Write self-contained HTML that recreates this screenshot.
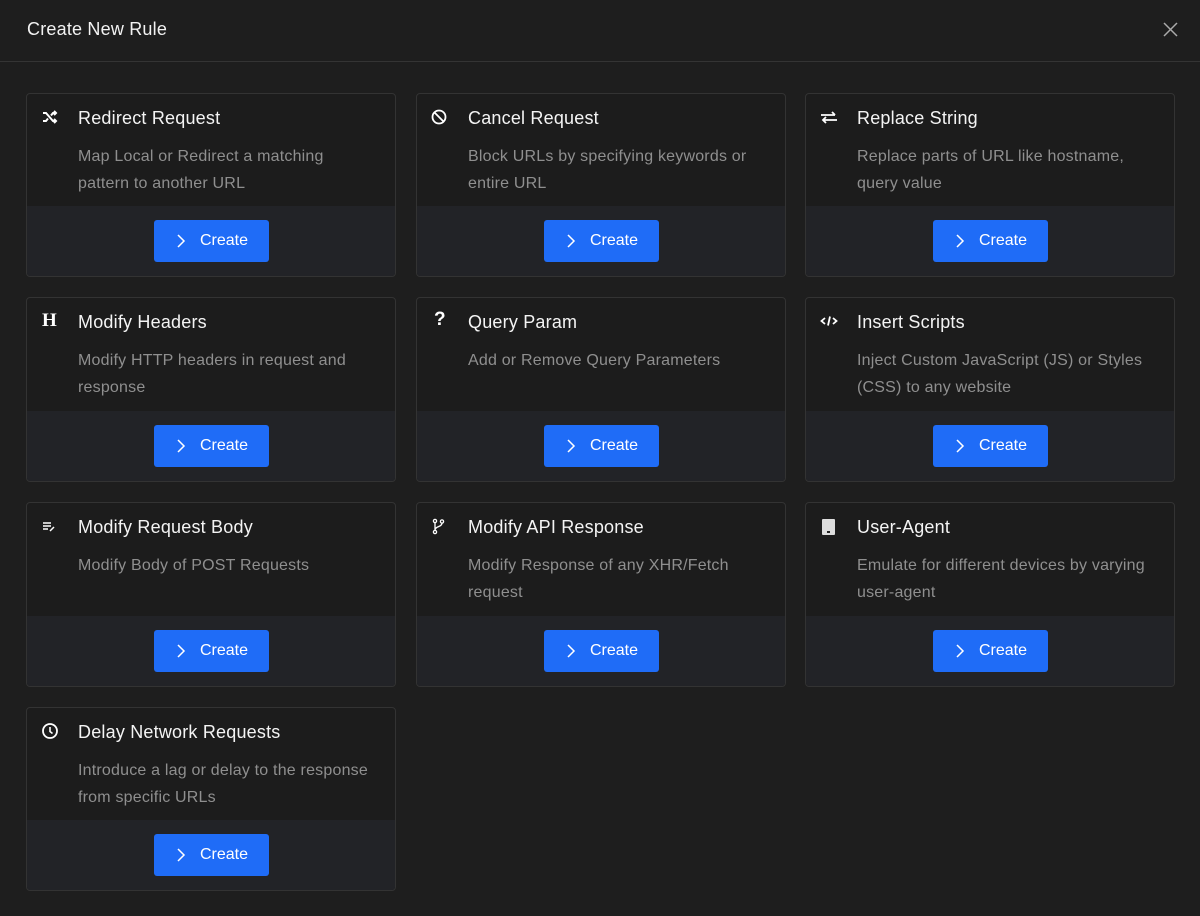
<!DOCTYPE html>
<html><head><meta charset="utf-8"><style>
*{box-sizing:border-box;margin:0;padding:0}
body{width:1200px;height:916px;background:#1e1e1e;font-family:"Liberation Sans",Roboto,sans-serif;overflow:hidden;position:relative}
.hdr{height:62px;border-bottom:1px solid #343434;position:relative}
.hdr h1{position:absolute;left:27px;top:19px;font-size:18px;font-weight:normal;color:#f2f2f2;letter-spacing:0.2px}
.close{position:absolute;left:1163px;top:22px}
.card{position:absolute;width:370px;height:184px;background:#1c1c1c;border:1px solid #333;border-radius:4px;overflow:hidden}
.card .ic{position:absolute;left:14px;top:15px;width:18px;height:18px}
.card h2{position:absolute;left:51px;top:14px;font-size:18px;font-weight:normal;color:#f4f4f4;letter-spacing:0.2px}
.card p{position:absolute;left:51px;top:50px;width:282px;font-size:16px;line-height:26.5px;color:#8f8f8f;letter-spacing:0.2px}
.ft{position:absolute;left:0;right:0;bottom:0;height:70px;background:#222327}
.btn{position:absolute;left:127px;top:14px;width:115px;height:42px;background:#1f6cf7;border-radius:3px;color:#fff;font-size:16px;line-height:42px;padding-left:46px}
.btn svg{position:absolute;left:22px;top:14px}
</style></head><body>
<div class="hdr"><h1>Create New Rule</h1>
<svg class="close" width="15" height="15" viewBox="0 0 15 15"><path d="M1 1L14 14M14 1L1 14" stroke="#aaa" stroke-width="1.5"/></svg></div>

<div class="card" style="left:26px;top:93px">
<svg class="ic" viewBox="0 0 18 18" style="top:14px"><path d="M2 5h3l7 8h3M2 13h3l2-2.5M10 7.5L12 5h3M13 3l2 2-2 2M13 11l2 2-2 2" stroke="#fff" stroke-width="2" fill="none"/></svg>
<h2>Redirect Request</h2><p>Map Local or Redirect a matching pattern to another URL</p>
<div class="ft"><div class="btn"><svg width="10" height="14" viewBox="0 0 10 14"><path d="M2 1l6 6-6 6" stroke="#fff" stroke-width="1.5" fill="none"/></svg>Create</div></div></div>

<div class="card" style="left:416px;top:93px">
<svg class="ic" viewBox="0 0 18 18"><circle cx="8" cy="8" r="6.5" stroke="#fff" stroke-width="1.8" fill="none"/><path d="M3.5 3.5l9 9" stroke="#fff" stroke-width="1.8"/></svg>
<h2>Cancel Request</h2><p>Block URLs by specifying keywords or entire URL</p>
<div class="ft"><div class="btn"><svg width="10" height="14" viewBox="0 0 10 14"><path d="M2 1l6 6-6 6" stroke="#fff" stroke-width="1.5" fill="none"/></svg>Create</div></div></div>

<div class="card" style="left:805px;top:93px">
<svg class="ic" viewBox="0 0 18 18"><path d="M1 6h14M12 3l3 3M17 11H3M6 8l-3 3 3 3" stroke="#fff" stroke-width="1.8" fill="none"/></svg>
<h2>Replace String</h2><p>Replace parts of URL like hostname, query value</p>
<div class="ft"><div class="btn"><svg width="10" height="14" viewBox="0 0 10 14"><path d="M2 1l6 6-6 6" stroke="#fff" stroke-width="1.5" fill="none"/></svg>Create</div></div></div>

<div class="card" style="left:26px;top:297px;height:185px">
<div class="ic" style="color:#fff;font:bold 19px 'Liberation Serif',serif;top:12px;left:15px">H</div>
<h2>Modify Headers</h2><p>Modify HTTP headers in request and response</p>
<div class="ft"><div class="btn"><svg width="10" height="14" viewBox="0 0 10 14"><path d="M2 1l6 6-6 6" stroke="#fff" stroke-width="1.5" fill="none"/></svg>Create</div></div></div>

<div class="card" style="left:416px;top:297px;height:185px">
<div class="ic" style="color:#fff;font:bold 19px 'Liberation Sans',sans-serif;top:11px;left:17px">?</div>
<h2>Query Param</h2><p>Add or Remove Query Parameters</p>
<div class="ft"><div class="btn"><svg width="10" height="14" viewBox="0 0 10 14"><path d="M2 1l6 6-6 6" stroke="#fff" stroke-width="1.5" fill="none"/></svg>Create</div></div></div>

<div class="card" style="left:805px;top:297px;height:185px">
<svg class="ic" viewBox="0 0 18 18"><path d="M5 5L1.5 8 5 11M13 5l3.5 3-3.5 3M10 3.5L8 12.5" stroke="#fff" stroke-width="1.8" fill="none"/></svg>
<h2>Insert Scripts</h2><p style="width:310px">Inject Custom JavaScript (JS) or Styles (CSS) to any website</p>
<div class="ft"><div class="btn"><svg width="10" height="14" viewBox="0 0 10 14"><path d="M2 1l6 6-6 6" stroke="#fff" stroke-width="1.5" fill="none"/></svg>Create</div></div></div>

<div class="card" style="left:26px;top:502px;height:185px">
<svg class="ic" viewBox="0 0 18 18"><path d="M2 5h8M2 8h8M2 11h5M9 13l4-4" stroke="#fff" stroke-width="1.5" fill="none"/></svg>
<h2>Modify Request Body</h2><p>Modify Body of POST Requests</p>
<div class="ft"><div class="btn"><svg width="10" height="14" viewBox="0 0 10 14"><path d="M2 1l6 6-6 6" stroke="#fff" stroke-width="1.5" fill="none"/></svg>Create</div></div></div>

<div class="card" style="left:416px;top:502px;height:185px">
<svg class="ic" viewBox="0 0 18 18"><circle cx="4" cy="3" r="1.6" stroke="#fff" stroke-width="1.3" fill="none"/><circle cx="4" cy="14" r="1.6" stroke="#fff" stroke-width="1.3" fill="none"/><circle cx="11" cy="3.5" r="1.6" stroke="#fff" stroke-width="1.3" fill="none"/><path d="M4 4.6v7.8M11 5.1c0 4-7 3-7 7" stroke="#fff" stroke-width="1.3" fill="none"/></svg>
<h2>Modify API Response</h2><p>Modify Response of any XHR/Fetch request</p>
<div class="ft"><div class="btn"><svg width="10" height="14" viewBox="0 0 10 14"><path d="M2 1l6 6-6 6" stroke="#fff" stroke-width="1.5" fill="none"/></svg>Create</div></div></div>

<div class="card" style="left:805px;top:502px;height:185px">
<svg class="ic" viewBox="0 0 18 18"><rect x="2" y="1" width="13" height="16" rx="1" fill="#ddd"/><rect x="7" y="13" width="3" height="2" fill="#222"/></svg>
<h2>User-Agent</h2><p style="width:300px">Emulate for different devices by varying user-agent</p>
<div class="ft"><div class="btn"><svg width="10" height="14" viewBox="0 0 10 14"><path d="M2 1l6 6-6 6" stroke="#fff" stroke-width="1.5" fill="none"/></svg>Create</div></div></div>

<div class="card" style="left:26px;top:707px">
<svg class="ic" viewBox="0 0 18 18"><circle cx="9" cy="8" r="7" stroke="#fff" stroke-width="1.8" fill="none"/><path d="M9 4v4.5l2.5 2" stroke="#fff" stroke-width="1.6" fill="none"/></svg>
<h2>Delay Network Requests</h2><p style="width:310px">Introduce a lag or delay to the response from specific URLs</p>
<div class="ft"><div class="btn"><svg width="10" height="14" viewBox="0 0 10 14"><path d="M2 1l6 6-6 6" stroke="#fff" stroke-width="1.5" fill="none"/></svg>Create</div></div></div>
</body></html>
